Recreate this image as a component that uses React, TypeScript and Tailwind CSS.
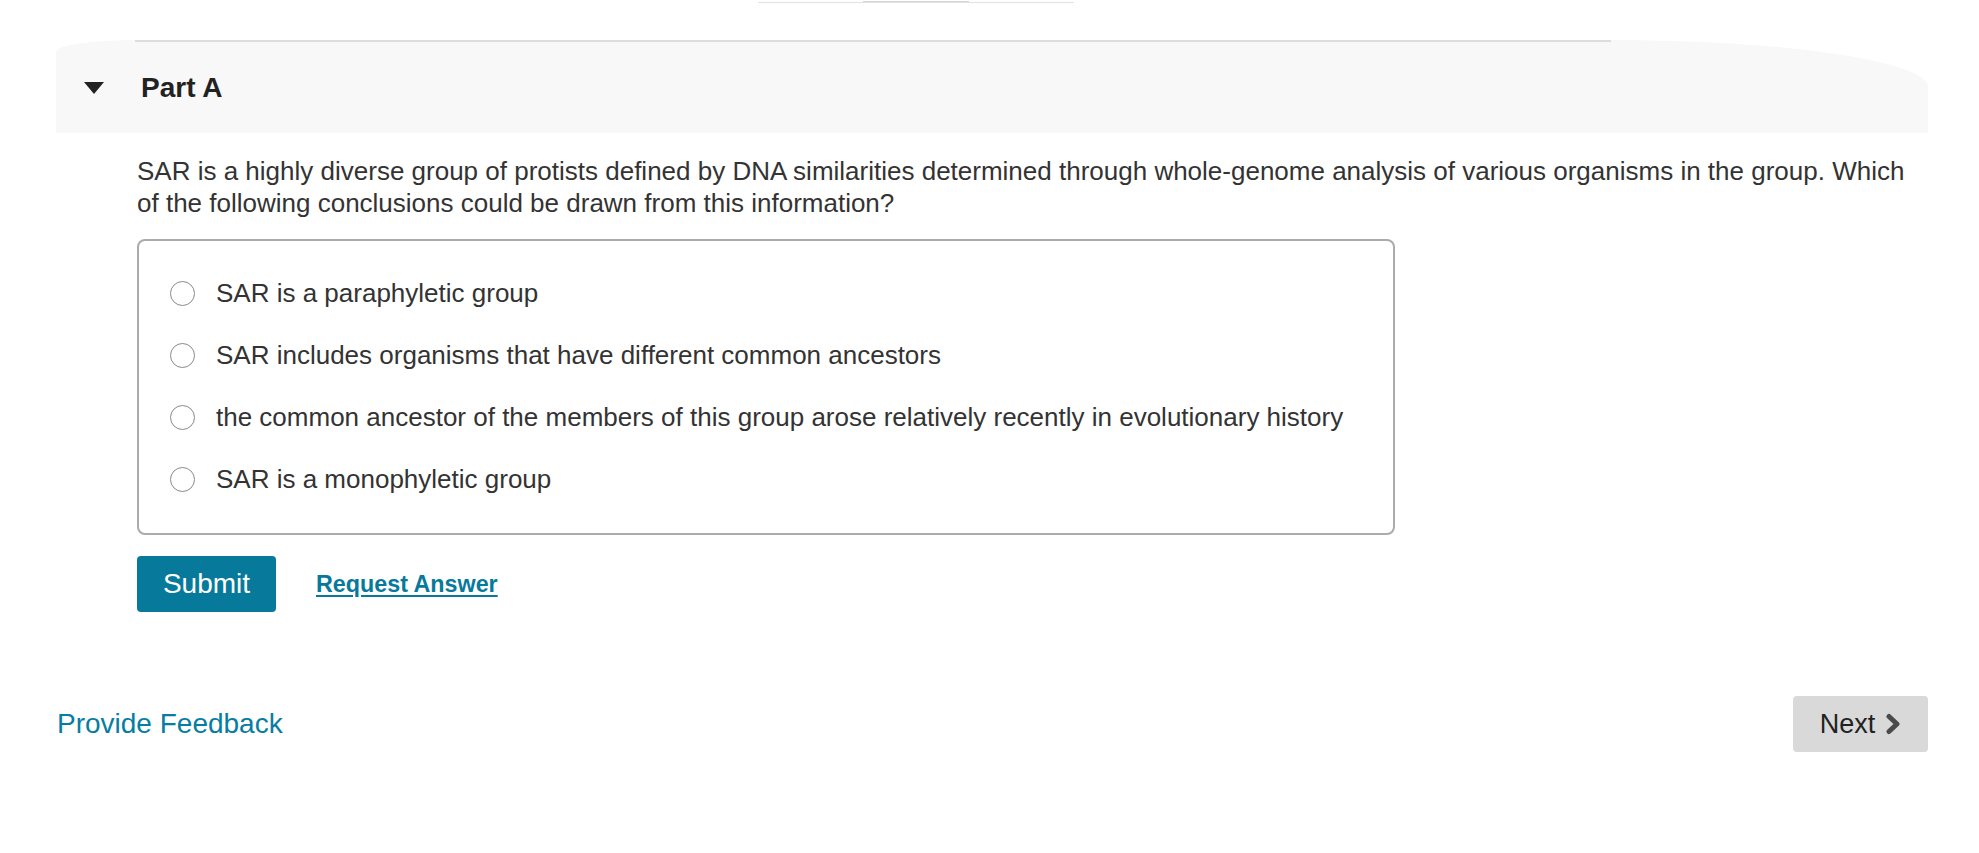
const options = [
  "SAR is a paraphyletic group",
  "SAR includes organisms that have different common ancestors",
  "the common ancestor of the members of this group arose relatively recently in evolutionary history",
  "SAR is a monophyletic group",
];

function Chevron() {
  return (
    <svg viewBox="0 0 16 22" className="h-[22px] w-[16px]" aria-hidden="true">
      <path d="M4 3.5 L12 11 L4 18.5" fill="none" stroke="#4a4a4a" strokeWidth="5" strokeLinecap="round" strokeLinejoin="round" />
    </svg>
  );
}

export default function App() {
  return (
    <div className="min-h-screen bg-white font-['Liberation_Sans',Arial,sans-serif] text-[#333333]">
      {/* top tab indicator */}
      <div className="h-[40px] pt-[1px]">
        <div className="ml-[758px] w-[316px]">
          <div className="ml-[105px] h-[1px] w-[106px] bg-[#d6d6d6]" />
          <div className="h-[1px] bg-[#e2e2e2]" />
        </div>
      </div>

      <div className="ml-[56px] w-[1872px]">
        {/* Part header */}
        <div className="h-[93px] rounded-tl-[79px_12px] rounded-tr-[318px_47px] bg-[#f8f8f8]">
          <div className="ml-[79px] mr-[317px] h-[2px] bg-[#dddddd]" />
          <div className="flex h-[91px] items-center">
            <div className="ml-[28px] h-0 w-0 border-x-[10.5px] border-t-[12px] border-x-transparent border-t-[#222222]" />
            <h2 className="ml-[37px] text-[28px] font-bold text-[#222222]">Part A</h2>
          </div>
        </div>

        <div className="pl-[81px]">
          <p className="pt-[22px] pr-[20px] text-[26px] leading-[32px]">
            SAR is a highly diverse group of protists defined by DNA similarities determined through whole-genome
            analysis of various organisms in the group. Which of the following conclusions could be drawn from this
            information?
          </p>

          <div className="mt-[20px] w-[1258px] rounded-[8px] border-2 border-[#ababab] pt-[21px] pb-[23px] pl-[31px]">
            {options.map((opt) => (
              <label key={opt} className="flex h-[62px] cursor-pointer items-center gap-[21px]">
                <span className="h-[25px] w-[25px] shrink-0 rounded-full border border-[#8a8a8a] bg-white" />
                <span className="text-[26px] leading-[32px]">{opt}</span>
              </label>
            ))}
          </div>

          <div className="mt-[21px] flex items-center gap-[40px]">
            <button className="h-[56px] w-[139px] rounded-[4px] bg-[#077a9c] text-[28px] text-white">Submit</button>
            <a className="text-[23.3px] font-bold text-[#077a9c] underline underline-offset-[3px]">Request Answer</a>
          </div>
        </div>

        {/* footer */}
        <div className="mt-[84px] flex items-center justify-between">
          <a className="ml-[1px] text-[28px] text-[#077da3]">Provide Feedback</a>
          <button className="flex h-[56px] w-[135px] items-center justify-center gap-[10px] rounded-[4px] bg-[#d9d9d9] text-[27px] text-[#222222]">
            Next
            <Chevron />
          </button>
        </div>
      </div>
    </div>
  );
}
